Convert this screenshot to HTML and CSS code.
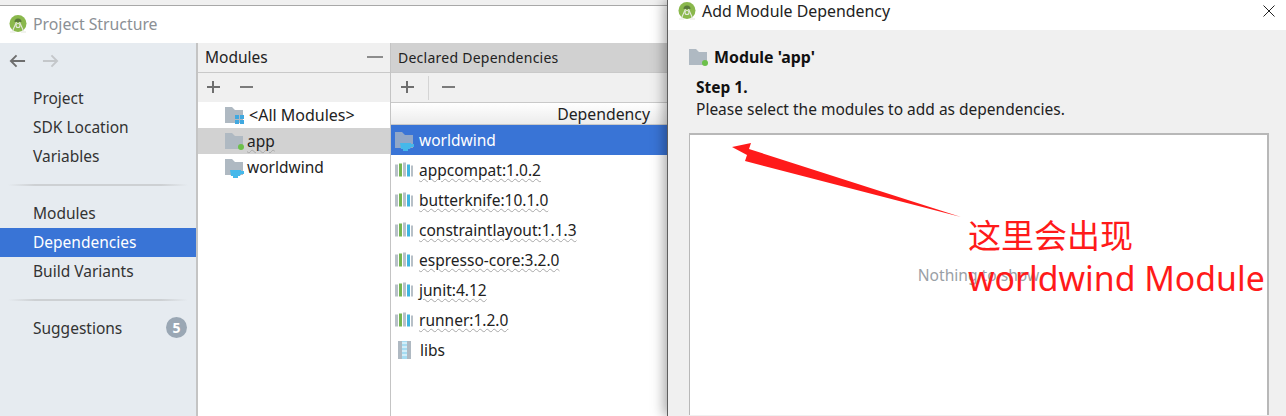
FILE: index.html
```html
<!DOCTYPE html>
<html lang="en">
<head>
<meta charset="utf-8">
<title>Project Structure</title>
<link rel="stylesheet" href="styles.css">
</head>
<body>
<svg class="defs" width="0" height="0">
  <defs>
    <symbol id="android" viewBox="0 0 18 18">
      <circle cx="9" cy="8.500" r="8.500" fill="#8ab84c"/>
      <path d="M9 3.500a3.500 3.500 0 0 1 3.500 3.500H5.500A3.500 3.500 0 0 1 9 3.500z" fill="#5a7a3a"/>
      <path d="M3.500 16 7.500 7M14.500 16 10.500 7M1 17h5M12 17h5" stroke="#e4e8dc" stroke-width="1.100" fill="none"/>
      <circle cx="9" cy="10.500" r="2" fill="none" stroke="#e4e8dc" stroke-width="1.100"/>
    </symbol>
    <symbol id="folder" viewBox="0 0 18 16">
      <path d="M0 0h7l3 3h8v13H0z" fill="#afb9c2"/>
    </symbol>
    <symbol id="lib" viewBox="0 0 18 14">
      <rect x="0" y="2" width="3" height="12" fill="#b7c0c7"/>
      <rect x="4" y="1" width="3" height="13" fill="#74b652"/>
      <rect x="8" y="0" width="3" height="14" fill="#b7c0c7"/>
      <rect x="12" y="2" width="3" height="12" fill="#40b6e0"/>
      <rect x="16" y="3" width="2" height="11" fill="#b7c0c7"/>
    </symbol>
  </defs>
</svg>

<div class="screen">
  <section class="project">
    <header class="titlebar">
      <svg class="app-icon"><use href="#android"/></svg>
      <span class="title-muted">Project Structure</span>
    </header>
    <div class="columns">
      <nav class="sidebar">
        <div class="history">
          <svg class="arrow" viewBox="0 0 18 14"><path d="M17 7H2M8 1 2 7l6 6" fill="none" stroke="#6e6e6e" stroke-width="2"/></svg>
          <svg class="arrow" viewBox="0 0 18 14"><path d="M1 7h15M10 1l6 6-6 6" fill="none" stroke="#c4c7ca" stroke-width="2"/></svg>
        </div>
        <a class="nav-item">Project</a>
        <a class="nav-item">SDK Location</a>
        <a class="nav-item">Variables</a>
        <hr class="nav-sep">
        <a class="nav-item">Modules</a>
        <a class="nav-item active">Dependencies</a>
        <a class="nav-item">Build Variants</a>
        <hr class="nav-sep">
        <a class="nav-item suggestions">Suggestions <span class="badge">5</span></a>
      </nav>

      <div class="modules">
        <div class="panel-head light"><span>Modules</span><i class="dash"></i></div>
        <div class="toolbar">
          <span class="tool plus"></span>
          <span class="tool minus"></span>
        </div>
        <ul class="module-list">
          <li class="module-row all">
            <span class="ico">
              <svg class="folder"><use href="#folder"/></svg>
              <svg class="mark-win" viewBox="0 0 9 9"><path d="M0 0h4v4H0zM5 0h4v4H5zM0 5h4v4H0zM5 5h4v4H5z" fill="#40a8e0"/></svg>
            </span>
            &lt;All Modules&gt;
          </li>
          <li class="module-row current">
            <span class="ico">
              <svg class="folder"><use href="#folder"/></svg>
              <i class="mark-dot"></i>
            </span>
            <span class="squiggle">app</span>
          </li>
          <li class="module-row">
            <span class="ico">
              <svg class="folder"><use href="#folder"/></svg>
              <svg class="mark-cup" viewBox="0 0 14 8"><path d="M0 0h11v1h3v3h-3l-1 2H8v2H3V6H1z" fill="#45b8ea"/></svg>
            </span>
            worldwind
          </li>
        </ul>
      </div>

      <div class="deps">
        <div class="panel-head dark">Declared Dependencies</div>
        <div class="toolbar">
          <span class="tool plus"></span>
          <span class="divider"></span>
          <span class="tool minus"></span>
        </div>
        <div class="table-head">Dependency</div>
        <ul class="dep-list">
          <li class="dep-row selected">
            <span class="ico">
              <svg class="folder tint"><use href="#folder"/></svg>
              <svg class="mark-cup" viewBox="0 0 14 8"><path d="M0 0h11v1h3v3h-3l-1 2H8v2H3V6H1z" fill="#45b8ea"/></svg>
            </span>
            worldwind
          </li>
          <li class="dep-row"><svg class="lib"><use href="#lib"/></svg><span class="squiggle">appcompat:1.0.2</span></li>
          <li class="dep-row"><svg class="lib"><use href="#lib"/></svg><span class="squiggle">butterknife:10.1.0</span></li>
          <li class="dep-row"><svg class="lib"><use href="#lib"/></svg><span class="squiggle">constraintlayout:1.1.3</span></li>
          <li class="dep-row"><svg class="lib"><use href="#lib"/></svg><span class="squiggle">espresso-core:3.2.0</span></li>
          <li class="dep-row"><svg class="lib"><use href="#lib"/></svg><span class="squiggle">junit:4.12</span></li>
          <li class="dep-row"><svg class="lib"><use href="#lib"/></svg><span class="squiggle">runner:1.2.0</span></li>
          <li class="dep-row">
            <svg class="jar" viewBox="0 0 13 18">
              <rect width="4" height="18" fill="#afb9c2"/>
              <rect x="9" width="4" height="18" fill="#afb9c2"/>
              <rect x="4" width="5" height="18" fill="#a5dcf2"/>
              <path d="M4 2h5M4 6h5M4 10h5M4 14h5" stroke="#fff" stroke-width="1"/>
            </svg>
            libs
          </li>
        </ul>
      </div>
    </div>
  </section>

  <section class="dialog">
    <header class="dialog-title">
      <svg class="app-icon"><use href="#android"/></svg>
      <span>Add Module Dependency</span>
      <svg class="close" viewBox="0 0 12 12"><path d="M.5.500l11 11M11.500.500l-11 11" stroke="#222" stroke-width="1" fill="none"/></svg>
    </header>
    <div class="dialog-body">
      <div class="module-name">
        <span class="ico">
          <svg class="folder"><use href="#folder"/></svg>
          <i class="mark-dot"></i>
        </span>
        Module 'app'
      </div>
      <div class="step">Step 1.</div>
      <div class="step-help">Please select the modules to add as dependencies.</div>
      <div class="empty-box">Nothing to show</div>
    </div>
  </section>

  <svg class="annotation-arrow" viewBox="0 0 240 90">
    <path d="M1 15 20 11 18 17 230 85 14 29 16 23 Z" fill="#ff1a1a"/>
  </svg>
  <div class="annotation-text">
    <div class="anno-cn">这里会出现</div>
    <div class="anno-en">worldwind Module</div>
  </div>
</div>
</body>
</html>
```

FILE: styles.css
```css
* { box-sizing: border-box; }
html, body { margin: 0; padding: 0; height: 100%; overflow: hidden; }
body { font-family: "Noto Sans", "Open Sans", sans-serif; font-size: 15.500px; color: #222; background: #f0f0f0; }
ul { list-style: none; margin: 0; padding: 0; }
.defs { position: absolute; }

.screen { position: relative; display: flex; width: 1286px; height: 416px; overflow: hidden; }

/* project window */
.project { width: 667px; padding-top: 5px; display: flex; flex-direction: column; flex: none; }
.titlebar { height: 38px; border-top: 1px solid #a8a8a8; background: #fff; display: flex; align-items: center; padding: 0 0 2px 9px; gap: 6px; flex: none; }
.app-icon { width: 18px; height: 18px; flex: none; }
.title-muted { font-size: 15.800px; color: #8b9095; }
.columns { flex: 1; display: flex; min-height: 0; }

/* sidebar */
.sidebar { width: 198px; flex: none; background: #e6ebf0; border-right: 2px solid #c4c4c4; }
.history { height: 41px; display: flex; align-items: center; gap: 16px; padding: 0 0 5px 9px; }
.arrow { width: 17px; height: 14px; }
.nav-item { display: flex; align-items: center; height: 29px; padding: 0 0 2px 33px; font-size: 15.500px; color: #333; }
.nav-item.active { background: #3974d6; color: #fff; }
.nav-sep { border: 0; height: 2px; margin: 13px 8px; background: linear-gradient(90deg, #e6ebf0, #cdd0d3 15%, #cdd0d3 85%, #e6ebf0); }
.suggestions { justify-content: space-between; padding-right: 9px; }
.badge { width: 21px; height: 21px; border-radius: 50%; background: #9aa7b4; color: #fff; font-size: 14px; font-weight: 700; display: flex; align-items: center; justify-content: center; }

/* modules column */
.modules { width: 193px; flex: none; display: flex; flex-direction: column; border-right: 1px solid #c4c4c4; background: #fff; }
.panel-head { height: 30px; border-bottom: 1px solid #c9c9c9; display: flex; align-items: center; flex: none; }
.panel-head.light { background: #f0f0f0; padding: 0 7px 2px; justify-content: space-between; font-size: 15.500px; }
.panel-head.dark { background: #d1d1d1; padding-left: 7px; font-size: 14px; letter-spacing: .25px; }
.dash { width: 16px; height: 2px; background: #8c8c8c; }
.toolbar { height: 30px; background: #f0f0f0; display: flex; align-items: center; padding-left: 8px; flex: none; }
.modules .toolbar { height: 29px; gap: 18px; }
.deps .toolbar { padding-left: 9px; border-bottom: 1px solid #c9c9c9; gap: 0; }
.tool { position: relative; display: block; width: 15px; height: 13px; }
.tool::before { content: ""; position: absolute; left: 1px; right: 1px; top: 5px; height: 2px; background: #6e6e6e; }
.tool.plus::after { content: ""; position: absolute; left: 6px; top: 0; width: 2px; height: 12px; background: #6e6e6e; }
.tool.minus::before { background: #7b7b7b; }
.divider { width: 1px; height: 24px; background: #d4d4d4; margin: 0 12px 0 13px; }

.module-row { height: 26px; display: flex; align-items: center; padding: 0 0 1px 27px; font-size: 15.500px; gap: 4px; }
.module-row.current { background: #d2d2d2; }
.module-row.all { gap: 6px; font-size: 16px; }

.ico { position: relative; display: block; width: 18px; height: 16px; flex: none; }
.folder { display: block; width: 18px; height: 16px; }
.folder.tint { opacity: .75; }
.mark-dot { position: absolute; right: -1px; bottom: -1px; width: 6px; height: 6px; border-radius: 50%; background: #6cc04a; }
.mark-win { position: absolute; right: -1px; bottom: -1px; width: 9px; height: 9px; }
.mark-cup { position: absolute; left: 5px; bottom: -3px; width: 14px; height: 8px; }

.squiggle { text-decoration: underline wavy #a8a8a8 1px; text-underline-offset: 2px; }

/* dependencies column */
.deps { flex: 1; min-width: 0; display: flex; flex-direction: column; background: #fff; }
.table-head { height: 22px; background: linear-gradient(#fff, #ececec); border-bottom: 1px solid #c9c9c9; text-align: right; padding-right: 17px; font-size: 15.800px; line-height: 22px; flex: none; }
.dep-row { height: 30px; display: flex; align-items: center; padding: 0 0 1px 4px; font-size: 15.500px; gap: 6px; }
.dep-row.selected { background: #3974d6; color: #fff; gap: 6px; }
.lib { width: 18px; height: 15px; flex: none; }
.jar { width: 13px; height: 18px; margin: 0 3px; flex: none; }

/* dialog */
.dialog { flex: 1; min-width: 0; display: flex; flex-direction: column; border-left: 1px solid #5f5f5f; box-shadow: -3px 0 12px rgba(0,0,0,.35); z-index: 1; background: #f0f0f0; }
.dialog-title { height: 30px; background: #fff; display: flex; align-items: center; padding: 0 11px 8px 10px; gap: 6px; font-size: 15.900px; color: #222; flex: none; }
.close { width: 12px; height: 12px; margin-left: auto; }
.dialog-body { flex: 1; min-height: 0; display: flex; flex-direction: column; padding-left: 21px; padding-right: 17px; }
.module-name { display: flex; align-items: center; gap: 7px; font-weight: 700; font-size: 15.900px; height: 20px; margin-top: 17px; color: #111; }
.step { font-weight: 700; font-size: 15.500px; margin: 10px 0 0 7px; height: 20px; line-height: 20px; color: #111; }
.step-help { font-size: 15.500px; margin: 2px 0 0 7px; height: 21px; line-height: 20px; }
.empty-box { flex: 1; margin-top: 13px; margin-bottom: 1px; background: #fff; border: 1px solid #b8b8b8; border-width: 2px 2px 0 1px; display: flex; align-items: center; justify-content: center; font-size: 15.600px; color: #9aa0a6; padding-bottom: 1px; }

/* red annotation over the dialog */
.annotation-arrow { position: absolute; left: 731px; top: 132px; width: 240px; height: 90px; overflow: visible; z-index: 2; }
.annotation-text { position: absolute; left: 968px; top: 213px; z-index: 2; color: #ff1a1a; line-height: 43px; white-space: nowrap; }
.anno-cn { font-family: "Noto Sans CJK SC", sans-serif; font-size: 33px; }
.anno-en { font-family: "Noto Sans", sans-serif; font-size: 33.800px; line-height: 44px; }
```
